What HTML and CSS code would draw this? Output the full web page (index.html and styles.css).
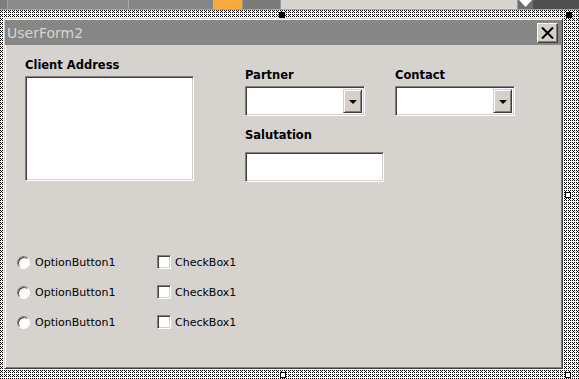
FILE: index.html
```html
<!DOCTYPE html>
<html lang="en">
<head>
    <meta charset="UTF-8">
    <title>UserForm2</title>
    <link rel="stylesheet" href="styles.css">
</head>
<body>

<div class="toolbar">
    <div class="tb-seg tb-grey"></div>
    <div class="tb-seg tb-mid"></div>
    <div class="tb-seg tb-orange"></div>
    <div class="tb-seg tb-gap"></div>
    <div class="tb-seg tb-light"></div>
    <div class="tb-seg tb-arrow">
        <svg width="13" height="8" viewBox="0 0 13 8"><path d="M0 0 H13 L6.5 7 Z" fill="#fff"/></svg>
    </div>
    <div class="tb-seg tb-dark"></div>
</div>

<div class="stage">
    <div class="form">
        <div class="titlebar">
            <span class="title">UserForm2</span>
            <div class="close">
                <svg width="13" height="12" viewBox="0 0 13 12"><path d="M1 0.5 L12 11.5 M12 0.5 L1 11.5" stroke="#000" stroke-width="2"/></svg>
            </div>
        </div>
        <div class="form-body">
            <div class="top-section">
                <div class="field">
                    <label class="label">Client Address</label>
                    <div class="sunken address"></div>
                </div>
                <div class="column">
                    <div class="row">
                        <div class="field">
                            <label class="label">Partner</label>
                            <div class="sunken combo"><div class="drop"><span class="arrow"></span></div></div>
                        </div>
                        <div class="field">
                            <label class="label">Contact</label>
                            <div class="sunken combo"><div class="drop"><span class="arrow"></span></div></div>
                        </div>
                    </div>
                    <div class="field salutation-field">
                        <label class="label">Salutation</label>
                        <div class="sunken salutation"></div>
                    </div>
                </div>
            </div>
            <div class="options">
                <div class="option"><span class="radio"></span>OptionButton1</div>
                <div class="option"><span class="check"></span>CheckBox1</div>
                <div class="option"><span class="radio"></span>OptionButton1</div>
                <div class="option"><span class="check"></span>CheckBox1</div>
                <div class="option"><span class="radio"></span>OptionButton1</div>
                <div class="option"><span class="check"></span>CheckBox1</div>
            </div>
        </div>
    </div>

    <span class="handle black h-top-mid"></span>
    <span class="handle black h-top-right"></span>
    <span class="handle h-right-mid"></span>
    <span class="handle h-bottom-mid"></span>
    <span class="handle h-bottom-right"></span>
</div>

</body>
</html>
```

FILE: styles.css
```css
body {
    margin: 0;
    width: 579px;
    height: 379px;
    overflow: hidden;
    font-family: "DejaVu Sans", Verdana, sans-serif;
    background: #fff;
}

.toolbar {
    display: flex;
    height: 9px;
    border-bottom: 1px solid #a8a8a8;
    background-color: #7e7e7e;
}

.tb-seg {
    height: 100%;
}

.tb-grey {
    width: 122px;
    background-color: #8c8c8c;
    border-left: 1px solid #a0a0a0;
    border-right: 1px solid #a6a6a6;
    margin-left: 7px;
    box-sizing: border-box;
}

.tb-mid {
    width: 84px;
    background-color: #858585;
}

.tb-orange {
    width: 29px;
    background-color: #f7a93c;
}

.tb-gap {
    width: 38px;
    background-color: #7b7b7b;
    border-left: 1px solid #9a9a9a;
    box-sizing: border-box;
}

.tb-light {
    width: 238px;
    background-color: #d8d5d0;
    border-left: 1px solid #999;
    border-right: 1px solid #999;
    box-sizing: border-box;
}

.tb-arrow {
    width: 15px;
    background-color: #6e6e6e;
    display: flex;
    justify-content: center;
}

.tb-dark {
    flex: 1;
    background-color: #4f4f4f;
}

.stage {
    position: relative;
    height: 369px;
    padding: 8px 16px 10px 4px;
    box-sizing: border-box;
    background-color: #fff;
    background-image:
        conic-gradient(from 270deg at 1px 1px, #000 25%, transparent 0),
        conic-gradient(from 270deg at 1px 1px, #000 25%, transparent 0);
    background-size: 2px 2px, 4px 4px;
    background-position: 0 0, 1px 1px;
}

.form {
    height: 100%;
    box-sizing: border-box;
    background-color: #d6d3ce;
    border: 1px solid;
    border-color: #d4d0c8 #404040 #404040 #d4d0c8;
    box-shadow: inset 1px 1px #fff, inset -1px -1px #808080;
    padding-top: 1px;
    display: flex;
    flex-direction: column;
}

.titlebar {
    height: 25px;
    background-color: #868686;
    display: flex;
    align-items: center;
    justify-content: space-between;
    padding: 0 3px 0 2px;
    margin-right: 1px;
}

.title {
    color: #d8d5cf;
    font-size: 14px;
}

.close {
    width: 21px;
    height: 20px;
    box-sizing: border-box;
    background-color: #d4d0c8;
    border: 1px solid;
    border-color: #fff #404040 #404040 #fff;
    box-shadow: inset -1px -1px #808080;
    display: flex;
    align-items: center;
    justify-content: center;
}

.form-body {
    padding: 13px 0 0 12px;
}

.top-section {
    display: flex;
    gap: 51px;
    margin-left: 8px;
}

.field {
    display: flex;
    flex-direction: column;
}

.label {
    font-size: 11.5px;
    font-weight: bold;
    line-height: 14px;
    color: #000;
    margin-bottom: 4px;
}

.column {
    margin-top: 10px;
}

.row {
    display: flex;
    gap: 30px;
}

.sunken {
    box-sizing: border-box;
    background-color: #fff;
    border: 1px solid;
    border-color: #808080 #fff #fff #808080;
    box-shadow: inset 1px 1px #404040, inset -1px -1px #d4d0c8;
}

.address {
    width: 169px;
    height: 105px;
}

.combo {
    width: 120px;
    height: 30px;
    display: flex;
    justify-content: flex-end;
    padding: 2px 2px 2px 0;
}

.drop {
    width: 19px;
    height: 100%;
    box-sizing: border-box;
    background-color: #d4d0c8;
    border: 1px solid;
    border-color: #d4d0c8 #404040 #404040 #d4d0c8;
    box-shadow: inset 1px 1px #fff, inset -1px -1px #808080;
    display: flex;
    align-items: center;
    justify-content: center;
}

.arrow {
    width: 0;
    height: 0;
    border-left: 4px solid transparent;
    border-right: 4px solid transparent;
    border-top: 4px solid #000;
    margin-top: 1px;
}

.salutation-field {
    margin-top: 12px;
}

.salutation-field .label {
    margin-bottom: 10px;
}

.salutation {
    width: 139px;
    height: 30px;
}

.options {
    margin-top: 65px;
    display: grid;
    grid-template-columns: 140px auto;
    grid-auto-rows: 30px;
}

.option {
    display: flex;
    align-items: center;
    font-size: 11px;
    color: #000;
}

.radio {
    width: 13px;
    height: 13px;
    box-sizing: border-box;
    border-radius: 50%;
    background-color: #fff;
    border: 1px solid;
    border-color: #808080 #fff #fff #808080;
    box-shadow: inset 1px 1px #404040;
    margin-right: 5px;
}

.check {
    width: 14px;
    height: 14px;
    box-sizing: border-box;
    background-color: #fff;
    border: 1px solid;
    border-color: #808080 #fff #fff #808080;
    box-shadow: inset 1px 1px #404040, inset -1px -1px #d4d0c8;
    margin-right: 4px;
}

.handle {
    position: absolute;
    width: 6px;
    height: 6px;
    box-sizing: border-box;
    background-color: #fff;
    border: 1px solid #000;
}

.handle.black {
    background-color: #000;
}

.h-top-mid {
    left: 279px;
    top: 2px;
}

.h-top-right {
    left: 566px;
    top: 2px;
}

.h-right-mid {
    left: 565px;
    top: 182px;
}

.h-bottom-mid {
    left: 280px;
    top: 362px;
}

.h-bottom-right {
    left: 565px;
    top: 362px;
}
```
